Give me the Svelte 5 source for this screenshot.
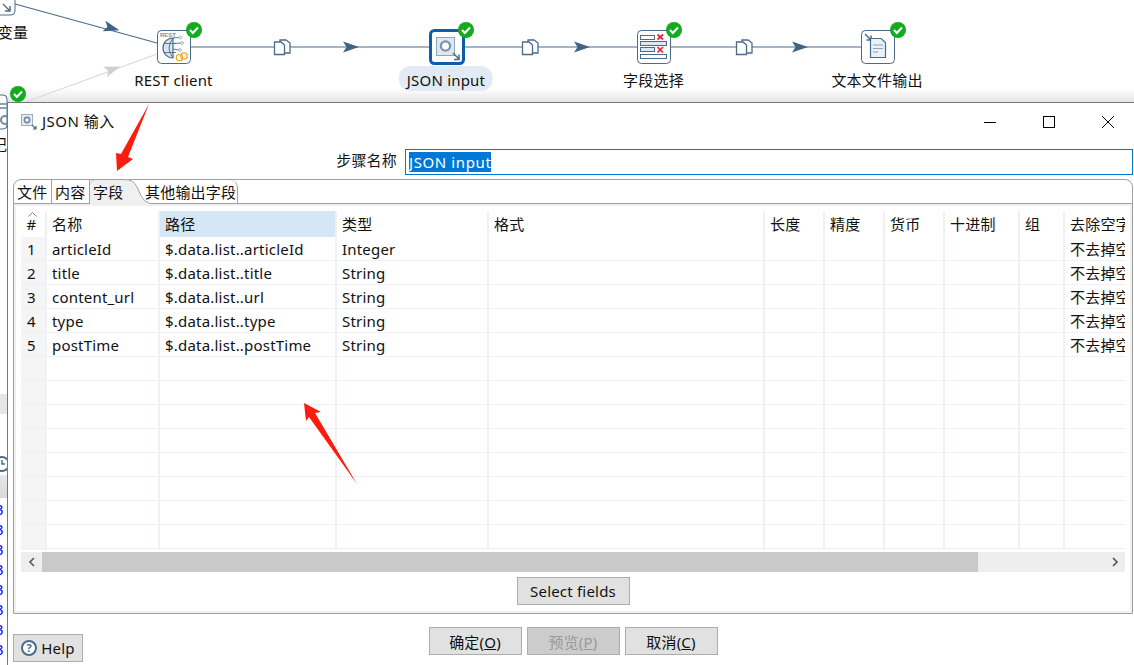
<script>
  const links = [
    { x1: 15, y1: 4, x2: 157, y2: 43, color: '#4a6c8c' },
    { x1: 20, y1: 104, x2: 157, y2: 54, color: '#d9d9d9' },
    { x1: 190, y1: 47, x2: 429, y2: 47, color: '#4a6c8c' },
    { x1: 465, y1: 47, x2: 637, y2: 47, color: '#4a6c8c' },
    { x1: 671, y1: 47, x2: 861, y2: 47, color: '#4a6c8c' }
  ];
  const heads = [
    { x: 343, y: 47, angle: 0, color: '#3f6484' },
    { x: 574, y: 47, angle: 0, color: '#3f6484' },
    { x: 792, y: 47, angle: 0, color: '#3f6484' },
    { x: 104, y: 26, angle: 15, color: '#3f6484' },
    { x: 105, y: 72, angle: -20, color: '#cfcfcf' }
  ];
  const copies = [282, 530, 744];
  const badges = [[194, 30], [466, 30], [674, 30], [898, 30], [18, 94]];
  const labels = [
    { text: 'REST client', x: 173.5 },
    { text: 'JSON input', x: 446, active: true },
    { text: '字段选择', x: 653.5 },
    { text: '文本文件输出', x: 877 }
  ];

  const columns = [
    { name: '#', width: 26 },
    { name: '名称', width: 113 },
    { name: '路径', width: 177, active: true },
    { name: '类型', width: 152 },
    { name: '格式', width: 276 },
    { name: '长度', width: 60 },
    { name: '精度', width: 60 },
    { name: '货币', width: 60 },
    { name: '十进制', width: 75 },
    { name: '组', width: 45 },
    { name: '去除空字符', width: 60 }
  ];
  const fields = [
    ['articleId', '$.data.list..articleId', 'Integer'],
    ['title', '$.data.list..title', 'String'],
    ['content_url', '$.data.list..url', 'String'],
    ['type', '$.data.list..type', 'String'],
    ['postTime', '$.data.list..postTime', 'String']
  ];
  const rows = Array.from({ length: 14 }, (_, i) => fields[i]);
  const sideDigits = [0, 1, 2, 3, 4, 5, 6, 7];
</script>

<div class="app">
  <div class="canvas">
    <svg class="diagram" width="1134" height="200" viewBox="0 0 1134 200">
      {#each links as l}
        <line x1={l.x1} y1={l.y1} x2={l.x2} y2={l.y2} stroke={l.color} stroke-width="1.2" />
      {/each}
      {#each heads as h}
        <path d="M0 -5.5 L16 0 L0 5.5 L3.5 0 Z" fill={h.color} transform="translate({h.x} {h.y}) rotate({h.angle})" />
      {/each}
      {#each copies as x}
        <g transform="translate({x} 47)" fill="#fff" stroke="#4a6c8c" stroke-width="1.3">
          <path d="M-2 -7 H4 L8 -4 V6 H-2 Z" />
          <path d="M-7.5 -5 H-1 L2.5 -2 V7.5 H-7.5 Z" />
        </g>
      {/each}

      <!-- left node, cut by the window edge -->
      <rect x="-14" y="-18" width="29" height="33" rx="4" fill="#fff" stroke="#4a6c8c" />
      <path d="M3 4 L10 11 M10 6 V11 H5" fill="none" stroke="#4a6c8c" stroke-width="1.4" />
      <rect x="-20" y="95" width="27" height="34" rx="4" fill="#fff" stroke="#4a6c8c" />
      <path d="M-2 104 H7 M-2 108 H7" stroke="#8aa2b8" stroke-width="2" />
      <circle cx="5" cy="120" r="4" fill="none" stroke="#6f8aa3" stroke-width="2" />

      <!-- REST client -->
      <rect x="157.5" y="30.5" width="33" height="33" rx="4" fill="#fff" stroke="#4a6c8c" />
      <text class="tiny" x="160" y="37">REST</text>
      <path d="M173 38 A10 10 0 0 0 173 58 Z" fill="#dbe5ee" stroke="#4a6c8c" stroke-width="1.2" />
      <path d="M173 38 Q165 48 173 58 M164 43.5 H176 M164 52.5 H176 M173 38 L180 37.5 M173 43.5 L181 43 M173 49 L179 50" fill="none" stroke="#4a6c8c" stroke-width="0.9" />
      <circle cx="180.5" cy="37.5" r="1.4" fill="#fff" stroke="#7d97ad" stroke-width="0.7" />
      <circle cx="182" cy="43" r="1.4" fill="#fff" stroke="#7d97ad" stroke-width="0.7" />
      <circle cx="180" cy="50" r="1.4" fill="#fff" stroke="#7d97ad" stroke-width="0.7" />
      <circle cx="179.5" cy="57.5" r="3.2" fill="none" stroke="#f4a52c" stroke-width="1.3" />
      <circle cx="184" cy="56" r="3.2" fill="none" stroke="#f4a52c" stroke-width="1.3" />

      <!-- JSON input -->
      <rect x="430.5" y="30.5" width="33" height="33" rx="4" fill="#fff" stroke="#0b5ea8" stroke-width="3" />
      <rect x="436.5" y="37.5" width="18" height="18" fill="#dfe7ef" stroke="#8ea5ba" />
      <circle cx="445.5" cy="46" r="4.6" fill="#fff" stroke="#7d96ac" stroke-width="2.4" />
      <path d="M453 53 L459 59 M459 54.5 V59.5 H454" fill="none" stroke="#4a6c8c" stroke-width="1.5" />

      <!-- field select -->
      <rect x="637.5" y="30.5" width="33" height="33" rx="4" fill="#fff" stroke="#4a6c8c" />
      <g fill="#dfe7ef" stroke="#4a6c8c">
        <rect x="640.5" y="35.5" width="14" height="4" fill="#fff" />
        <rect x="640.5" y="41.5" width="26" height="4" />
        <rect x="640.5" y="47.5" width="14" height="4" />
        <rect x="640.5" y="54.5" width="26" height="4" fill="#fff" />
      </g>
      <path d="M657.5 34.5 L663 39.5 M663 34.5 L657.5 39.5 M657.5 47 L663 52.5 M663 47 L657.5 52.5" stroke="#ea1c3a" stroke-width="1.7" />

      <!-- text output -->
      <rect x="861.5" y="30.5" width="33" height="33" rx="4" fill="#fff" stroke="#4a6c8c" />
      <path d="M865 34 L871 40 M871 35.5 V40 H866.5" fill="none" stroke="#4a6c8c" stroke-width="1.5" />
      <path d="M870.5 38.5 H881 L885.5 42.5 V57.5 H870.5 Z" fill="#eaf1f7" stroke="#4a6c8c" stroke-width="1.2" />
      <path d="M873 45 H883 M873 48.5 H883 M873 52 H878" stroke="#8ea5ba" />

      {#each badges as b}
        <g transform="translate({b[0]} {b[1]})">
          <circle r="8" fill="#12ab1e" />
          <path d="M-4 0 L-1.2 3 L4 -2.5" fill="none" stroke="#fff" stroke-width="2.2" />
        </g>
      {/each}
    </svg>

    <span class="node-label cut">变量</span>
    {#each labels as l}
      <span class="node-label" class:active={l.active} style="left: {l.x}px">{l.text}</span>
    {/each}
  </div>

  <div class="side">
    <span class="cut-word">记</span>
    <div class="side-band"></div>
    <svg class="clock" width="16" height="18" viewBox="0 0 16 18">
      <circle cx="2" cy="9" r="7" fill="#fff" stroke="#4a6c8c" stroke-width="2" />
      <path d="M2 5 V9 H5" fill="none" stroke="#4a6c8c" stroke-width="1.5" />
    </svg>
    <div class="side-band low"></div>
    <div class="digits">
      {#each sideDigits as d (d)}
        <span>3</span>
      {/each}
    </div>
  </div>

  <section class="dialog">
    <header class="titlebar">
      <svg width="16" height="16" viewBox="0 0 16 16">
        <rect x="0.5" y="0.5" width="11" height="11" fill="#e4ebf2" stroke="#9db0c2" />
        <circle cx="6" cy="6" r="2.6" fill="#fff" stroke="#6f8aa3" stroke-width="1.6" />
        <path d="M11 11 L15 15 M15 12 V15 H12" fill="none" stroke="#4a6c8c" stroke-width="1.2" />
      </svg>
      <span class="title">JSON 输入</span>
      <div class="winbtns">
        <svg width="14" height="14" viewBox="0 0 14 14"><path d="M1 7.5 H13" stroke="#000" /></svg>
        <svg width="14" height="14" viewBox="0 0 14 14"><rect x="1.5" y="1.5" width="11" height="11" fill="none" stroke="#000" /></svg>
        <svg width="14" height="14" viewBox="0 0 14 14"><path d="M1 1 L13 13 M13 1 L1 13" stroke="#000" /></svg>
      </div>
    </header>

    <div class="step">
      <label for="step-name">步骤名称</label>
      <div id="step-name" class="step-input"><span>JSON input</span></div>
    </div>

    <div class="folder">
      <div class="tabs">
        <span class="tab">文件</span>
        <span class="tab">内容</span>
        <span class="tab current">字段
          <svg class="tail" width="26" height="25" viewBox="0 0 26 25">
            <path d="M0 0 C10 0 12 4 15 10 C18 17 21 23 26 23 V25 H0 Z" fill="#f0f0f0" />
            <path d="M0 0.5 C10 0.5 12 4 15 10 C18 17 21 23.5 26 23.5" fill="none" stroke="#a0a0a0" />
          </svg>
        </span>
        <span class="tab last">其他输出字段</span>
      </div>

      <div class="pane">
        <div class="grid-wrap">
          <table>
            <colgroup>
              {#each columns as c}
                <col style="width: {c.width}px" />
              {/each}
            </colgroup>
            <thead>
              <tr>
                {#each columns as c, i}
                  <th class:active={c.active} class:num={i === 0}>
                    {#if i === 0}
                      <svg class="caret" width="9" height="5" viewBox="0 0 9 5"><path d="M0.5 4.5 L4.5 0.5 L8.5 4.5" fill="none" stroke="#888" /></svg>
                    {/if}
                    {c.name}
                  </th>
                {/each}
              </tr>
            </thead>
            <tbody>
              {#each rows as row, i}
                <tr>
                  <td class="num">{row ? i + 1 : ''}</td>
                  <td>{row ? row[0] : ''}</td>
                  <td>{row ? row[1] : ''}</td>
                  <td>{row ? row[2] : ''}</td>
                  <td></td><td></td><td></td><td></td><td></td><td></td>
                  <td>{row ? '不去掉空格' : ''}</td>
                </tr>
              {/each}
            </tbody>
          </table>
        </div>

        <div class="scrollbar">
          <span class="scroll-btn">
            <svg width="8" height="10" viewBox="0 0 8 10"><path d="M6 1 L2 5 L6 9" fill="none" stroke="#555" stroke-width="1.6" /></svg>
          </span>
          <div class="thumb"></div>
          <span class="scroll-btn end">
            <svg width="8" height="10" viewBox="0 0 8 10"><path d="M2 1 L6 5 L2 9" fill="none" stroke="#555" stroke-width="1.6" /></svg>
          </span>
        </div>

        <div class="select-row">
          <button class="btn wide">Select fields</button>
        </div>
      </div>
    </div>

    <footer class="footer">
      <button class="btn help">
        <svg width="16" height="16" viewBox="0 0 16 16">
          <circle cx="8" cy="8" r="7" fill="#fff" stroke="#4a6c8c" stroke-width="2" />
          <text x="8" y="12" text-anchor="middle" class="qmark">?</text>
        </svg>
        Help
      </button>
      <div class="actions">
        <button class="btn act">确定(<u>O</u>)</button>
        <button class="btn act off">预览(<u>P</u>)</button>
        <button class="btn act">取消(<u>C</u>)</button>
      </div>
    </footer>
  </section>

  <svg class="marks" width="1134" height="665" viewBox="0 0 1134 665">
    <polygon points="149,104 128,157 133,159 117,171 116,153 121,154" fill="#fb1c0e" />
    <polygon points="304,403 321,412 315,413 357,484 309,417 306,421" fill="#fb1c0e" />
  </svg>
</div>

<style>
  :global(body) {
    margin: 0;
    background: #fff;
  }

  .app {
    position: relative;
    width: 1134px;
    height: 665px;
    overflow: hidden;
    color: #111;
    font-family: "Noto Sans", "Noto Sans CJK SC", sans-serif;
    font-size: 15px;
    letter-spacing: 0.2px;
  }

  .canvas {
    position: relative;
    height: 102px;
    background: linear-gradient(to bottom, #fff 86%, #e6e6e6 100%);
  }

  .diagram {
    position: absolute;
    left: 0;
    top: 0;
  }

  .tiny {
    font-size: 6px;
    font-weight: 700;
    letter-spacing: 0;
    fill: #7d8fa0;
    font-family: "Liberation Sans", sans-serif;
  }

  .node-label {
    position: absolute;
    top: 70px;
    transform: translateX(-50%);
    padding: 0 5px;
    line-height: 21px;
    white-space: nowrap;
    border-radius: 12px;
  }

  .node-label.active {
    top: 66px;
    padding: 4px 8px 0;
    background: #e2ebf5;
  }

  .node-label.cut {
    top: 22px;
    left: 13px;
  }

  .side {
    position: absolute;
    left: 0;
    top: 103px;
    bottom: 0;
    width: 7px;
    overflow: hidden;
    display: flex;
    flex-direction: column;
  }

  .cut-word {
    margin: 31px 0 0 -8px;
    line-height: 20px;
  }

  .side-band {
    flex: none;
    height: 20px;
    margin-top: 240px;
    background: #e6e6e6;
  }

  .clock {
    margin-top: 41px;
    flex: none;
  }

  .side-band.low {
    height: 23px;
    margin-top: 2px;
    background: linear-gradient(#e8e8e8, #d8d8d8);
  }

  .digits {
    display: flex;
    flex-direction: column;
    margin-top: 1px;
    margin-left: -5px;
    color: #0000ff;
    line-height: 20px;
  }

  .dialog {
    position: absolute;
    left: 7px;
    top: 102px;
    right: 0;
    bottom: 0;
    background: #fff;
    border-top: 1px solid #777;
    border-left: 1px solid #777;
    display: flex;
    flex-direction: column;
  }

  .titlebar {
    height: 38px;
    padding: 0 19px 0 13px;
    display: flex;
    align-items: center;
    gap: 5px;
  }

  .title {
    margin-top: -4px;
    letter-spacing: 0.5px;
  }

  .winbtns {
    margin-left: auto;
    display: flex;
    gap: 45px;
  }

  .step {
    margin-top: 8px;
    height: 26px;
    display: flex;
    align-items: center;
    gap: 8px;
    padding-right: 1px;
  }

  .step label {
    width: 389px;
    text-align: right;
    margin-top: -6px;
  }

  .step-input {
    flex: 1;
    height: 24px;
    border: 1px solid #0078d7;
    padding-left: 3px;
    display: flex;
    align-items: center;
  }

  .step-input span {
    background: #0078d7;
    color: #fff;
    line-height: 20px;
    letter-spacing: 0.6px;
  }

  .folder {
    margin: 4px 1px 0 5px;
    height: 435px;
    box-sizing: border-box;
    border: 1px solid #a0a0a0;
    border-radius: 8px 8px 0 0;
    display: flex;
    flex-direction: column;
  }

  .tabs {
    height: 23px;
    flex: none;
    display: flex;
    border-bottom: 1px solid #a0a0a0;
  }

  .tab {
    position: relative;
    box-sizing: border-box;
    height: 23px;
    padding: 0 3px;
    line-height: 25px;
    white-space: nowrap;
    border-right: 1px solid #a0a0a0;
  }

  .tab:first-child,
  .tab:nth-child(2) {
    width: 38px;
  }

  .tab.current {
    width: 33px;
    height: 25px;
    border-right: 0;
    background: #f0f0f0;
    border-radius: 6px 0 0 0;
    margin-top: -1px;
    border-top: 1px solid #a0a0a0;
    z-index: 1;
  }

  .tail {
    position: absolute;
    left: 33px;
    top: -1px;
  }

  .tab.last {
    width: 115px;
    padding-left: 22px;
    border-radius: 0 8px 0 0;
  }

  .pane {
    flex: 1;
    border: 2px solid #f0f0f0;
    padding: 5px 5px 0;
    background: #fff;
  }

  .grid-wrap {
    width: 1104px;
    height: 339px;
    overflow: hidden;
    margin-bottom: 2px;
  }

  table {
    table-layout: fixed;
    width: 1104px;
    border-collapse: separate;
    border-spacing: 0;
  }

  th,
  td {
    box-sizing: border-box;
    padding: 0 5px;
    overflow: hidden;
    white-space: nowrap;
    text-align: left;
    font-weight: 400;
    border-right: 2px solid #eef2f8;
  }

  th {
    position: relative;
    height: 26px;
    line-height: 22px;
    padding-bottom: 1px;
    border-right-color: #f0f0f0;
  }

  th.active {
    background: #d5e7f7;
  }

  td {
    height: 24px;
    border-bottom: 1px solid #eef0f4;
    line-height: 21px;
    padding-top: 2px;
  }

  td:last-child,
  th:last-child {
    border-right: 0;
  }

  th.num,
  td.num {
    padding: 0 3px 0 0;
    text-align: center;
  }

  th.num {
    padding-bottom: 1px;
  }

  td.num {
    background: #f5f5f5;
    padding-top: 2px;
  }

  .caret {
    position: absolute;
    left: 7px;
    top: 1px;
  }

  .scrollbar {
    width: 1104px;
    height: 20px;
    display: flex;
    background: #eee;
  }

  .scroll-btn {
    width: 21px;
    display: flex;
    align-items: center;
    justify-content: center;
  }

  .scroll-btn.end {
    margin-left: auto;
  }

  .thumb {
    width: 936px;
    background: #c9c9c9;
  }

  .select-row {
    display: flex;
    justify-content: center;
    margin-top: 5px;
  }

  .btn {
    box-sizing: border-box;
    height: 28px;
    padding: 0;
    background: #e1e1e1;
    border: 1px solid #adadad;
    color: #111;
    font: inherit;
    letter-spacing: inherit;
  }

  .btn.wide {
    width: 113px;
  }

  .footer {
    margin: 13px 1px 0 5px;
    display: grid;
    grid-template-columns: 1fr auto 1fr;
  }

  .help {
    justify-self: start;
    width: 70px;
    margin-top: 7px;
    display: flex;
    align-items: center;
    justify-content: center;
    gap: 4px;
  }

  .qmark {
    font-size: 11px;
    font-weight: 700;
    letter-spacing: 0;
    fill: #4a6c8c;
  }

  .actions {
    display: flex;
    gap: 5px;
  }

  .act {
    width: 93px;
  }

  .act.off {
    background: #ccc;
    color: #999;
  }

  .marks {
    position: absolute;
    left: 0;
    top: 0;
    pointer-events: none;
  }
</style>
